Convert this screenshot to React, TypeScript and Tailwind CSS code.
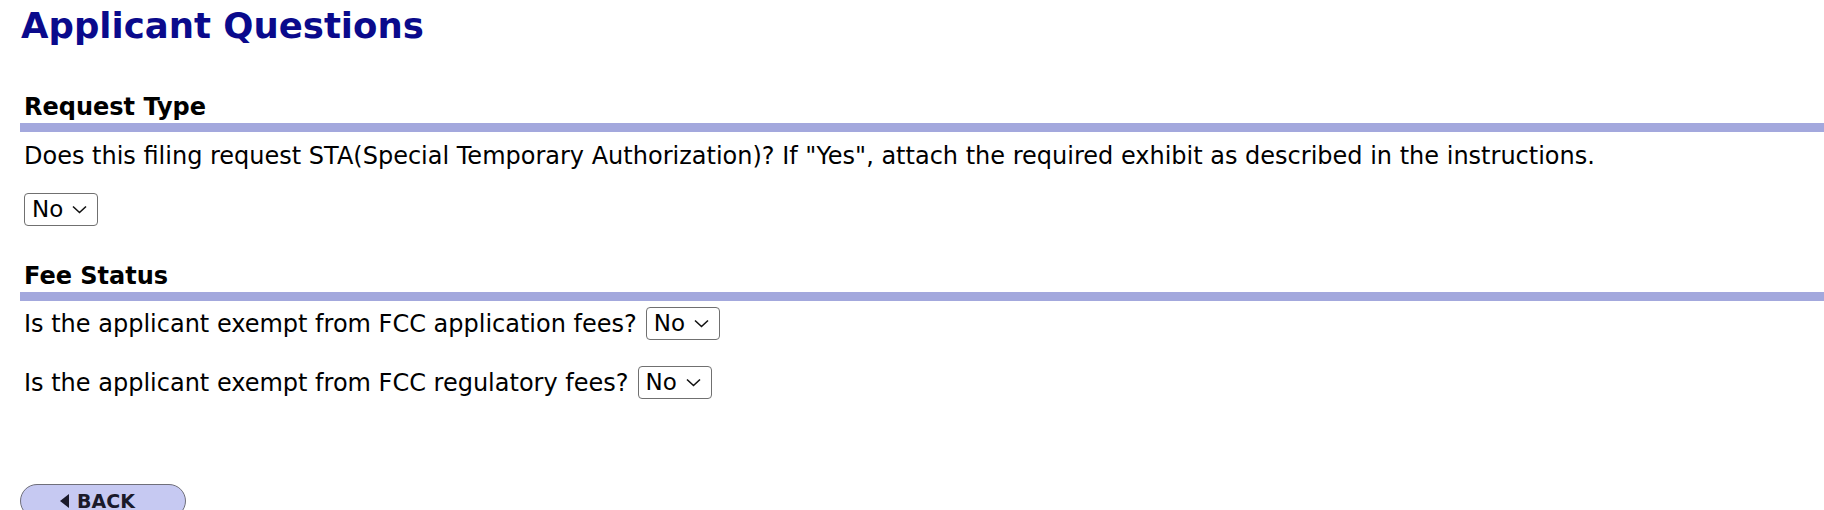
import React from "react";

const font = { fontFamily: '"DejaVu Sans", Verdana, sans-serif' };

function NoSelect() {
  return (
    <span className="inline-flex h-[33px] w-[74px] shrink-0 items-center gap-[9px] rounded-[4px] border-[1.5px] border-[#707070] bg-white pl-[7px] align-middle text-[23px] leading-none text-black">
      No
      <svg width="15" height="9" viewBox="0 0 15 9" fill="none">
        <path d="M1 1.5 L7.5 7.5 L14 1.5" stroke="#111" strokeWidth="1.6" />
      </svg>
    </span>
  );
}

function SectionHeader({ title }: { title: string }) {
  return (
    <div>
      <h2 className="pl-[24px] text-[24px] font-bold leading-[28px] text-black">{title}</h2>
      <div className="ml-[20px] mt-[2px] h-[9px] bg-[#a3a8dd]" />
    </div>
  );
}

export default function App() {
  return (
    <div className="h-[510px] overflow-hidden bg-white text-black" style={font}>
      <h1 className="pl-[21px] pt-[6px] text-[35.5px] font-bold leading-[40px] text-[#0a0a8c]">
        Applicant Questions
      </h1>

      <div className="mt-[47px]">
        <SectionHeader title="Request Type" />
        <p className="mt-[10px] pl-[24px] text-[24px] leading-[28px]">
          Does this filing request STA(Special Temporary Authorization)? If "Yes", attach the required exhibit as
          described in the instructions.
        </p>
        <div className="mt-[23px] flex pl-[24px]">
          <NoSelect />
        </div>
      </div>

      <div className="mt-[36px]">
        <SectionHeader title="Fee Status" />
        <div className="mt-[6px] flex h-[33px] items-center gap-[9px] pl-[24px] text-[24px] leading-[28px]">
          <span>Is the applicant exempt from FCC application fees?</span>
          <NoSelect />
        </div>
        <div className="mt-[26px] flex h-[33px] items-center gap-[9px] pl-[24px] text-[24px] leading-[28px]">
          <span>Is the applicant exempt from FCC regulatory fees?</span>
          <NoSelect />
        </div>
      </div>

      <div className="mt-[85px] pl-[20px]">
        <button className="flex h-[34px] w-[166px] items-start justify-start gap-[8px] rounded-[17px] border-[1.5px] border-[#6f6f7a] bg-[#c6c9f2] pl-[39px] pt-[4px] text-[19px] font-bold leading-[24px] text-[#1a1a2a]">
          <svg width="9" height="14" viewBox="0 0 9 14" className="mt-[5px]">
            <path d="M9 0 L0 7 L9 14 Z" fill="#1a1a2a" />
          </svg>
          BACK
        </button>
      </div>
    </div>
  );
}
